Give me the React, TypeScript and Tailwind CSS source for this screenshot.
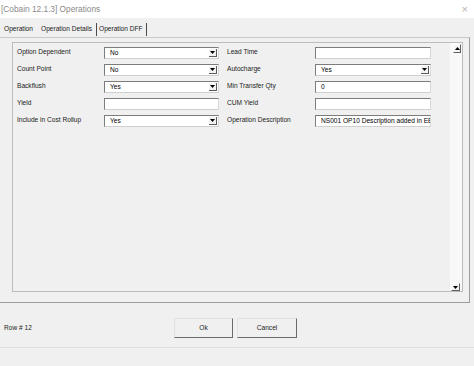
import React from "react";

function Tri({ dir }: { dir: "up" | "down" }) {
  return (
    <svg width="5" height="3" viewBox="0 0 5 3" className="block">
      <path d={dir === "down" ? "M0 0H5L2.5 3Z" : "M0 3H5L2.5 0Z"} fill="#000" />
    </svg>
  );
}

function Field({ value, select, wide }: { value: string; select?: boolean; wide?: boolean }) {
  return (
    <div
      className={
        (wide ? "w-[116px] " : "w-[115px] ") +
        "h-[12px] shrink-0 bg-white border-t border-l border-t-[#7c7c7c] border-l-[#7c7c7c] border-r border-b border-r-[#d9d9d9] border-b-[#cfcfcf] flex items-stretch overflow-hidden"
      }
    >
      <div className="flex-1 min-w-0 pl-[5px] flex items-center whitespace-nowrap overflow-hidden text-black leading-none">
        {value}
      </div>
      {select && (
        <div className="w-[8px] my-[1px] mr-[1px] shrink-0 bg-[#f3f3f3] border-r border-b border-[#5a5a5a] flex items-center justify-center">
          <Tri dir="down" />
        </div>
      )}
    </div>
  );
}

type Item = { label: string; value: string; select?: boolean };

const rows: [Item, Item][] = [
  [
    { label: "Option Dependent", value: "No", select: true },
    { label: "Lead Time", value: "" },
  ],
  [
    { label: "Count Point", value: "No", select: true },
    { label: "Autocharge", value: "Yes", select: true },
  ],
  [
    { label: "Backflush", value: "Yes", select: true },
    { label: "Min Transfer Qty", value: "0" },
  ],
  [
    { label: "Yield", value: "" },
    { label: "CUM Yield", value: "" },
  ],
  [
    { label: "Include in Cost Rollup", value: "Yes", select: true },
    { label: "Operation Description", value: "NS001 OP10 Description added in EBS" },
  ],
];

export default function App() {
  return (
    <div className="w-[474px] h-[366px] overflow-hidden bg-[#f0f0f0] font-['Liberation_Sans',Arial,sans-serif] text-[6.6px] text-[#222]">
      {/* title bar */}
      <div className="h-[18px] bg-white flex items-center justify-between pl-[1px] pr-[6px]">
        <span className="text-[8.3px] text-[#8a8a8a] leading-none">[Cobain 12.1.3] Operations</span>
        <span className="text-[11px] text-[#b4b4b4] leading-none">×</span>
      </div>

      {/* tabs */}
      <div className="h-[19px] flex items-end">
        <div className="w-[39px] h-[13px] mb-[1px] pl-[4px] flex items-center leading-none">Operation</div>
        <div className="w-[58px] h-[13px] mb-[1px] pl-[2px] flex items-center leading-none border-r border-[#4a4a4a]">
          Operation Details
        </div>
        <div className="w-[50px] h-[13px] mb-[1px] pl-[2px] flex items-center leading-none border-r border-[#4a4a4a]">
          Operation DFF
        </div>
      </div>

      {/* frame */}
      <div className="w-[470px] h-[266px] border-t border-t-[#c9c9c9] border-r border-b border-r-[#9c9c9c] border-b-[#9c9c9c] pt-[4px] pl-[12px] pr-[6px] pb-[10px]">
        <div className="w-[451px] h-[250px] border border-[#bcbcbc] flex">
          <div className="flex-1 pt-[4px] pl-[4px] flex flex-col gap-[5px]">
            {rows.map(([l, r], i) => (
              <div key={i} className="h-[12px] flex items-center">
                <div className="w-[87px] shrink-0 leading-none -mt-[2px]">{l.label}</div>
                <Field value={l.value} select={l.select} />
                <div className="w-[88px] ml-[8px] shrink-0 leading-none -mt-[2px]">{r.label}</div>
                <Field value={r.value} select={r.select} wide />
              </div>
            ))}
          </div>
          <div className="w-[12px] bg-[#f8f8f8] flex flex-col justify-between">
            <div className="w-[8px] h-[9px] mt-[1px] ml-[3px] bg-[#f4f4f4] border-t border-l border-white border-r border-b border-r-[#5e5e5e] border-b-[#5e5e5e] flex items-center justify-center">
              <Tri dir="up" />
            </div>
            <div className="w-[9px] h-[8px] ml-[1px] bg-[#f4f4f4] border-t border-l border-white border-r border-b border-r-[#5e5e5e] border-b-[#5e5e5e] flex items-center justify-center">
              <Tri dir="down" />
            </div>
          </div>
        </div>
      </div>

      {/* footer */}
      <div className="h-[44px] pt-[15px] flex items-start">
        <div className="w-[174px] h-[20px] pl-[4px] flex items-center leading-none">Row # 12</div>
        <button className="w-[59px] h-[20px] bg-[#f0f0f0] border-t border-l border-[#e2e2e2] border-r border-b border-r-[#6a6a6a] border-b-[#6a6a6a] flex items-center justify-center leading-none text-[#222]">
          Ok
        </button>
        <button className="w-[60px] h-[20px] ml-[4px] bg-[#f0f0f0] border-t border-l border-[#e2e2e2] border-r border-b border-r-[#6a6a6a] border-b-[#6a6a6a] flex items-center justify-center leading-none text-[#222]">
          Cancel
        </button>
      </div>
      <div className="h-px bg-[#dedede]" />
      <div className="h-[18px] bg-[#f0f0f0]" />
    </div>
  );
}
